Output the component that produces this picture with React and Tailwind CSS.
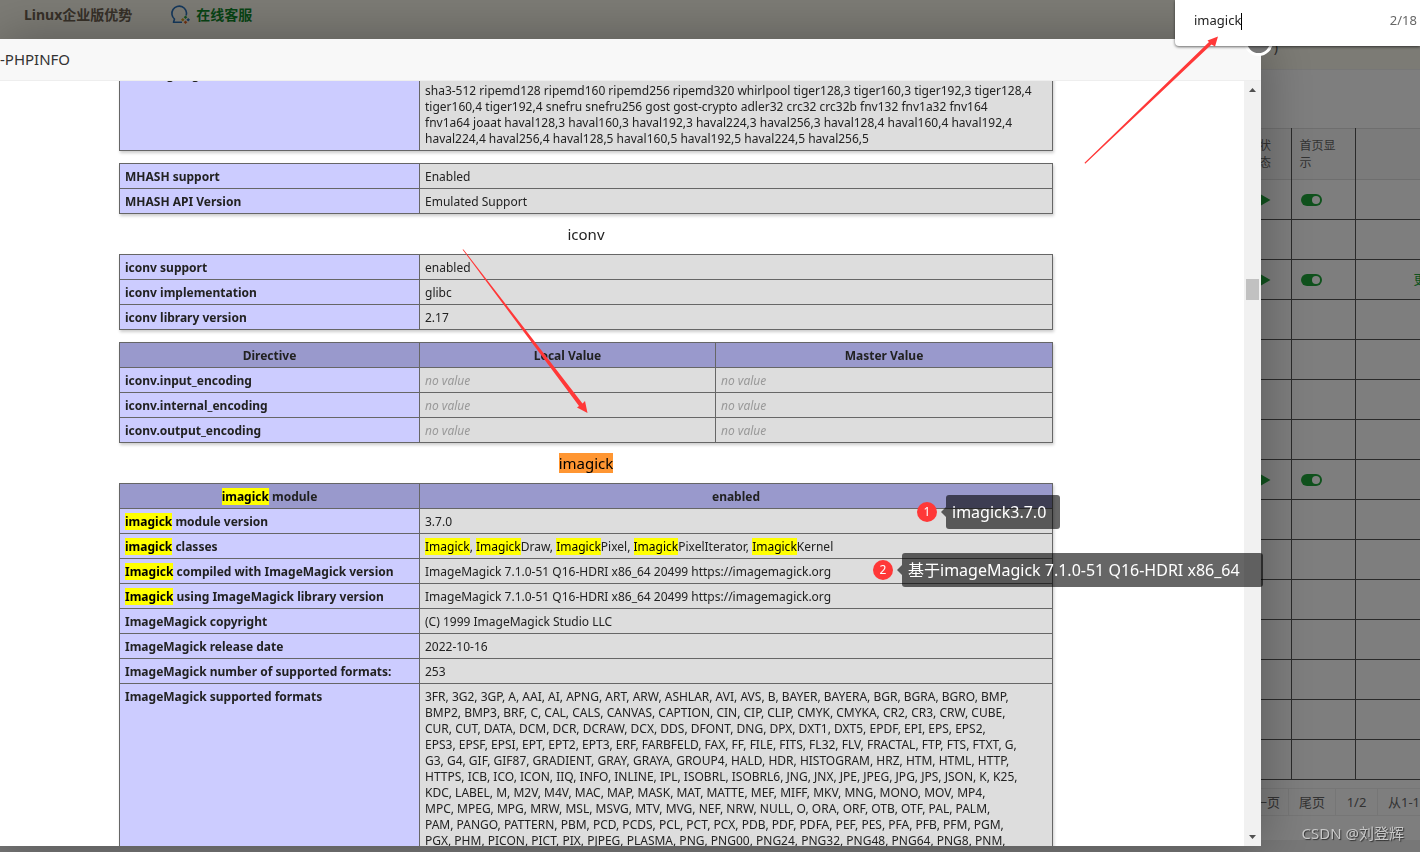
import { Fragment } from 'react';

const hashLines = [
  '\u00a0',
  'sha3-512 ripemd128 ripemd160 ripemd256 ripemd320 whirlpool tiger128,3 tiger160,3 tiger192,3 tiger128,4',
  'tiger160,4 tiger192,4 snefru snefru256 gost gost-crypto adler32 crc32 crc32b fnv132 fnv1a32 fnv164',
  'fnv1a64 joaat haval128,3 haval160,3 haval192,3 haval224,3 haval256,3 haval128,4 haval160,4 haval192,4',
  'haval224,4 haval256,4 haval128,5 haval160,5 haval192,5 haval224,5 haval256,5',
];

const formatLines = [
  '3FR, 3G2, 3GP, A, AAI, AI, APNG, ART, ARW, ASHLAR, AVI, AVS, B, BAYER, BAYERA, BGR, BGRA, BGRO, BMP,',
  'BMP2, BMP3, BRF, C, CAL, CALS, CANVAS, CAPTION, CIN, CIP, CLIP, CMYK, CMYKA, CR2, CR3, CRW, CUBE,',
  'CUR, CUT, DATA, DCM, DCR, DCRAW, DCX, DDS, DFONT, DNG, DPX, DXT1, DXT5, EPDF, EPI, EPS, EPS2,',
  'EPS3, EPSF, EPSI, EPT, EPT2, EPT3, ERF, FARBFELD, FAX, FF, FILE, FITS, FL32, FLV, FRACTAL, FTP, FTS, FTXT, G,',
  'G3, G4, GIF, GIF87, GRADIENT, GRAY, GRAYA, GROUP4, HALD, HDR, HISTOGRAM, HRZ, HTM, HTML, HTTP,',
  'HTTPS, ICB, ICO, ICON, IIQ, INFO, INLINE, IPL, ISOBRL, ISOBRL6, JNG, JNX, JPE, JPEG, JPG, JPS, JSON, K, K25,',
  'KDC, LABEL, M, M2V, M4V, MAC, MAP, MASK, MAT, MATTE, MEF, MIFF, MKV, MNG, MONO, MOV, MP4,',
  'MPC, MPEG, MPG, MRW, MSL, MSVG, MTV, MVG, NEF, NRW, NULL, O, ORA, ORF, OTB, OTF, PAL, PALM,',
  'PAM, PANGO, PATTERN, PBM, PCD, PCDS, PCL, PCT, PCX, PDB, PDF, PDFA, PEF, PES, PFA, PFB, PFM, PGM,',
  'PGX, PHM, PICON, PICT, PIX, PJPEG, PLASMA, PNG, PNG00, PNG24, PNG32, PNG48, PNG64, PNG8, PNM,',
];

const imagickRows = [
  ['imagick module version', '3.7.0'],
  ['imagick classes', 'Imagick, ImagickDraw, ImagickPixel, ImagickPixelIterator, ImagickKernel'],
  ['Imagick compiled with ImageMagick version', 'ImageMagick 7.1.0-51 Q16-HDRI x86_64 20499 https://imagemagick.org'],
  ['Imagick using ImageMagick library version', 'ImageMagick 7.1.0-51 Q16-HDRI x86_64 20499 https://imagemagick.org'],
  ['ImageMagick copyright', '(C) 1999 ImageMagick Studio LLC'],
  ['ImageMagick release date', '2022-10-16'],
  ['ImageMagick number of supported formats:', '253'],
  ['ImageMagick supported formats', formatLines],
];

const siteRows = Array.from({ length: 15 }, (_, i) => ({
  id: i,
  active: i === 0 || i === 2 || i === 7,
  action: i === 2 ? '更' : '',
}));

// Wraps every hit of the find-in-page query in a <mark>
function Highlight({ text }) {
  return text.split(/(imagick)/i).map((part, i) =>
    i % 2 ? (
      <mark key={i} className="bg-[#ffff00] text-black">{part}</mark>
    ) : (
      <Fragment key={i}>{part}</Fragment>
    )
  );
}

function InfoTable({ head, rows }) {
  return (
    <table className="w-full table-fixed border-collapse text-left shadow-[1px_2px_3px_#ccc]">
      <colgroup>
        <col className="w-[300px]" />
        {rows[0].length === 3 && <col className="w-[296px]" />}
        <col />
      </colgroup>
      {head && (
        <thead>
          <tr className="bg-[#9999cc]">
            {head.map((h) => (
              <th key={h} className="border border-[#666] px-[5px] pt-[5px] pb-[3px] text-center font-bold">
                <Highlight text={h} />
              </th>
            ))}
          </tr>
        </thead>
      )}
      <tbody>
        {rows.map(([label, ...values]) => (
          <tr key={label}>
            <th scope="row" className="whitespace-nowrap border border-[#666] bg-[#ccccff] px-[5px] pt-[5px] pb-[3px] align-top font-bold">
              <Highlight text={label} />
            </th>
            {values.map((value, i) => (
              <td key={i} className="whitespace-nowrap border border-[#666] bg-[#ddd] px-[5px] pt-[5px] pb-[3px] align-top">
                {value === null && <i className="text-[#999]">no value</i>}
                {Array.isArray(value) && value.map((line) => <div key={line}>{line}</div>)}
                {typeof value === 'string' && <Highlight text={value} />}
              </td>
            ))}
          </tr>
        ))}
      </tbody>
    </table>
  );
}

function SitePage() {
  return (
    <div className="flex h-screen flex-col bg-[#fdfdfd] text-[13px]">
      <header className="h-[69px] shrink-0 bg-[#f8f6ea]">
        <div className="flex h-7 items-center pl-6 text-[14px] font-bold">
          <span className="text-[#6d6050]">Linux企业版优势</span>
          <a href="#service" className="ml-[38px] flex items-center gap-1.5 text-[#10882a]">
            <svg className="h-5 w-5" viewBox="0 0 20 20" fill="none">
              <path d="M16.200 11.500A7.300 7.300 0 1 0 4.500 15L3.500 18.200H12" stroke="#2a70b8" strokeWidth="1.600" strokeLinejoin="round" />
              <path d="m15.500 11.500 1.800 1.800-1.800 1.800-1.800-1.800z" fill="#30a040" />
              <path d="m18.200 14 1.800 1.800-1.800 1.800-1.800-1.800z" fill="#2a70b8" />
              <path d="m12.800 14 1.800 1.800-1.800 1.800-1.800-1.800z" fill="#d8a020" />
              <path d="m15.500 16.400 1.800 1.800-1.800 1.800-1.800-1.800z" fill="#e06020" />
            </svg>
            在线客服
          </a>
        </div>
        <p className="flex h-9 items-center justify-end pr-[142px] text-[14px] text-[#555]">)</p>
      </header>
      <div className="flex flex-1 flex-col items-end border-t border-[#eee] pt-[58px]">
        <table className="w-[169px] table-fixed border-collapse text-left text-[12px] text-[#666]">
          <colgroup>
            <col className="w-10" />
            <col className="w-16" />
            <col />
          </colgroup>
          <thead>
            <tr className="h-[51px] border-t border-b border-[#ddd] bg-[#f6f6f6] leading-[17px]">
              <th className="border-r border-[#555] px-2 font-normal">状态</th>
              <th className="border-r border-[#555] px-2 font-normal">首页显示</th>
              <th />
            </tr>
          </thead>
          <tbody>
            {siteRows.map((row) => (
              <tr key={row.id} className="h-10 border-b border-[#555]">
                <td className="border-r border-[#555] pl-[9px]">
                  {row.active && (
                    <svg className="h-3 w-3" viewBox="0 0 12 12">
                      <path d="M1 0.500 10.500 6 1 11.500z" fill="#20a53a" />
                    </svg>
                  )}
                </td>
                <td className="border-r border-[#555] pl-[9px]">
                  {row.active && (
                    <label className="flex h-3 w-[21px] items-center justify-end rounded-full bg-[#20a53a] pr-0.5">
                      <input type="checkbox" defaultChecked aria-label="首页显示" className="sr-only" />
                      <span className="h-2 w-2 rounded-full bg-white" />
                    </label>
                  )}
                </td>
                <td className="overflow-hidden whitespace-nowrap pl-[58px] text-[13px] text-[#20a53a]">{row.action}</td>
              </tr>
            ))}
          </tbody>
        </table>
        <nav className="mt-2 flex h-7 w-[179px] overflow-hidden whitespace-nowrap border-y border-[#ececec] leading-[26px] text-[#666]">
          <a href="#next" className="w-12 shrink-0 border-r border-[#ececec] pr-2.5 text-right">下一页</a>
          <a href="#last" className="w-[47px] shrink-0 border-r border-[#ececec] text-center">尾页</a>
          <span className="w-[42px] shrink-0 border-r border-[#ececec] text-center">1/2</span>
          <span className="pl-2.5">从1-15条</span>
        </nav>
        <div className="mt-6 h-3 w-full bg-[#eee]" />
      </div>
    </div>
  );
}

function PhpInfoDialog() {
  return (
    <div className="fixed inset-0 flex bg-black/50 pt-[39px] pr-[159px] pb-1.5">
      <section role="dialog" aria-label="PHPINFO" className="relative flex min-w-0 flex-1 flex-col bg-white shadow-[1px_1px_50px_rgba(0,0,0,0.3)]">
        <h1 className="h-[42px] shrink-0 border-b border-[#eee] bg-[#f8f8f8] text-[15px] leading-[41px] text-[#333]">
          -PHPINFO
        </h1>
        <button
          type="button"
          aria-label="Close"
          className="absolute -top-3 -right-3 h-[29px] w-[29px] rounded-full border-[3px] border-white bg-[#777]"
        />
        <div className="flex min-h-0 flex-1">
          <div className="flex-1 overflow-hidden pl-[119px]">
            <main className="-mt-5 w-full max-w-[934px] text-[12px] leading-4 text-[#222]">
              <InfoTable rows={[['Hashing Engines', hashLines]]} />
              <div className="h-3" />
              <InfoTable rows={[['MHASH support', 'Enabled'], ['MHASH API Version', 'Emulated Support']]} />
              <h2 className="flex h-10 items-center justify-center text-[15px]">iconv</h2>
              <InfoTable
                rows={[
                  ['iconv support', 'enabled'],
                  ['iconv implementation', 'glibc'],
                  ['iconv library version', '2.17'],
                ]}
              />
              <div className="h-3" />
              <InfoTable
                head={['Directive', 'Local Value', 'Master Value']}
                rows={[
                  ['iconv.input_encoding', null, null],
                  ['iconv.internal_encoding', null, null],
                  ['iconv.output_encoding', null, null],
                ]}
              />
              <h2 className="flex h-10 items-center justify-center text-[15px]">
                <mark className="bg-[#ff9632] leading-5 text-black">imagick</mark>
              </h2>
              <InfoTable head={['imagick module', 'enabled']} rows={imagickRows} />
            </main>
          </div>
          <div className="flex w-[17px] flex-col items-center bg-[#f1f1f1]">
            <svg className="h-[17px] w-[17px]" viewBox="0 0 17 17">
              <path d="M5 11 8.500 7 12 11z" fill="#505050" />
            </svg>
            <div className="mt-[181px] h-[21px] w-[13px] bg-[#c1c1c1]" />
            <svg className="mt-auto h-[17px] w-[17px]" viewBox="0 0 17 17">
              <path d="M5 6 8.500 10 12 6z" fill="#505050" />
            </svg>
          </div>
        </div>
      </section>
    </div>
  );
}

function FindBar() {
  return (
    <div className="fixed top-0 right-0 flex h-[46px] w-[245px] items-center rounded-bl-sm bg-white pr-[3px] pb-1 pl-[19px] text-[13px] shadow-[0_1px_3px_rgba(0,0,0,0.6)]">
      <input aria-label="Find in page" defaultValue="imagick" className="field-sizing-content text-[#222] outline-none" />
      <span className="h-[17px] w-px bg-black" />
      <span className="ml-auto text-[#666]">2/18</span>
    </div>
  );
}

function Callout({ number, className, children }) {
  return (
    <div className={`absolute flex items-center whitespace-nowrap ${className}`}>
      <span className="flex h-5 w-5 items-center justify-center rounded-full bg-[#ff3838] text-[12px] text-white">{number}</span>
      <svg className="ml-1 h-2.5 w-[5px]" viewBox="0 0 5 10">
        <path d="M5 0v10L0 5z" fill="#000" fillOpacity="0.6" />
      </svg>
      <span className="flex h-[34px] flex-1 items-center rounded-[3px] bg-black/60 px-1.5 text-[16px] text-white">{children}</span>
    </div>
  );
}

export default function App() {
  return (
    <div className="relative h-screen overflow-hidden font-['Noto_Sans','Noto_Sans_CJK_SC',sans-serif]">
      <SitePage />
      <PhpInfoDialog />
      <FindBar />
      <svg className="absolute top-[36px] left-[1084px] h-[128px] w-[135px]" viewBox="0 0 135 128" fill="#ff3838">
        <path d="M0.500 126.800 125 6 123.500 4.500 134 0.500 131 10.500 127.500 8.500 1.200 127.800z" />
      </svg>
      <svg className="absolute top-[249px] left-[462px] h-[165px] w-[126px]" viewBox="0 0 126 165" fill="#ff3838">
        <path d="M0.500 0.500 1.500 0.500 120.500 154.500 123 152 125.500 164 115 158.500 117 157z" />
      </svg>
      <Callout number={1} className="top-[495px] left-[917px] w-[143px]">imagick3.7.0</Callout>
      <Callout number={2} className="top-[553px] left-[873px] w-[390px]">基于imageMagick 7.1.0-51 Q16-HDRI x86_64</Callout>
      <span className="absolute right-4 bottom-2 text-[15px] text-[#c8c8c8] [text-shadow:1px_1px_1px_#333]">CSDN @刘登辉</span>
    </div>
  );
}
